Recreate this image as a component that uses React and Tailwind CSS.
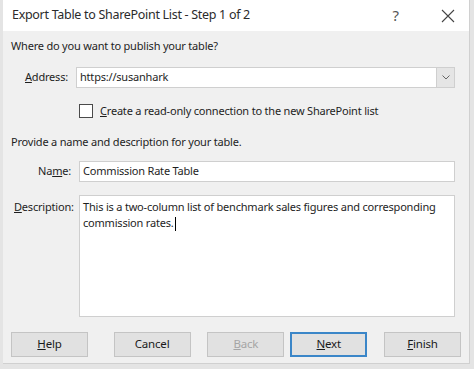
import React from 'react';

const font = { fontFamily: '"Noto Sans", "Open Sans", sans-serif' };

const Btn = ({ children, primary, disabled }) => (
  <button
    className={`h-[25px] w-[78px] text-[11.5px] tracking-[-0.2px] ${
      primary
        ? 'border-2 border-[#3b86c8] bg-[#e1e1e1]'
        : 'border border-[#c4c4c4] bg-[#e1e1e1]'
    } ${disabled ? 'text-[#a5a5a5]' : 'text-[#1a1a1a]'}`}
  >
    {children}
  </button>
);

export default function App() {
  return (
    <div className="w-[474px] h-[369px] bg-[#e4e4e4] overflow-hidden" style={font}>
      <div className="ml-[3px] w-[467px] h-[364px] bg-[#f0f0f0] border-r border-b border-[#d0d0d0] flex flex-col">
        {/* Title bar */}
        <div className="h-[31px] bg-white flex items-center pl-[9px] pr-[14px]">
          <span className="text-[12.5px] text-[#2b2b2b] tracking-[-0.3px]">
            Export Table to SharePoint List - Step 1 of 2
          </span>
          <div className="flex-1" />
          <span className="text-[15px] text-[#555] mr-[42px]">?</span>
          <svg className="w-[14px] h-[14px]" viewBox="0 0 14 14" stroke="#444" strokeWidth="1.1" fill="none">
            <path d="M1 1l12 12M13 1L1 13" />
          </svg>
        </div>

        <div className="px-[8px] text-[11px] tracking-[-0.2px] text-[#1e1e1e]">
          <div className="mt-[7px] h-[16px] leading-[16px]">Where do you want to publish your table?</div>

          <div className="mt-[13px] flex items-center">
            <label className="w-[65px] text-right pr-[8px]">
              <u>A</u>ddress:
            </label>
            <div className="flex-1 h-[21px] bg-white border border-[#cfcfcf] flex items-center">
              <span className="pl-[3px] flex-1">https://susanhark</span>
              <div className="w-[18px] h-[19px] bg-[#e5e5e5] border-l border-[#cfcfcf] flex items-center justify-center">
                <svg className="w-[8px] h-[5px]" viewBox="0 0 8 5" fill="none" stroke="#666" strokeWidth="1">
                  <path d="M0.5 0.5L4 4l3.5-3.5" />
                </svg>
              </div>
            </div>
            <div className="w-[6px]" />
          </div>

          <div className="mt-[15px] flex items-center pl-[68px]">
            <div className="w-[14px] h-[14px] bg-white border border-[#4a4a4a]" />
            <span className="ml-[7px]">
              <u>C</u>reate a read-only connection to the new SharePoint list
            </span>
          </div>

          <div className="mt-[14px] h-[16px] leading-[16px]">Provide a name and description for your table.</div>

          <div className="mt-[11px] flex items-center">
            <label className="w-[68px] text-right pr-[8px]">
              Na<u>m</u>e:
            </label>
            <div className="flex-1 h-[21px] bg-white border border-[#cfcfcf] flex items-center pl-[3px]">
              Commission Rate Table
            </div>
            <div className="w-[6px]" />
          </div>

          <div className="mt-[13px] flex items-start">
            <label className="w-[68px] pr-[6px] pl-[3px] pt-[4px]">
              <u>D</u>escription:
            </label>
            <div className="flex-1 h-[122px] bg-white border border-[#cfcfcf] px-[3px] pt-[3px] leading-[16px]">
              This is a two-column list of benchmark sales figures and corresponding commission rates.
              <span className="inline-block w-px h-[14px] bg-black align-middle ml-[1px]" />
            </div>
            <div className="w-[6px]" />
          </div>

          <div className="mt-[15px] flex items-center">
            <Btn><u>H</u>elp</Btn>
            <div className="w-[26px]" />
            <Btn>Cancel</Btn>
            <div className="w-[17px]" />
            <Btn disabled><u>B</u>ack</Btn>
            <div className="w-[6px]" />
            <Btn primary><u>N</u>ext</Btn>
            <div className="w-[17px]" />
            <Btn><u>F</u>inish</Btn>
          </div>
        </div>
      </div>
    </div>
  );
}
